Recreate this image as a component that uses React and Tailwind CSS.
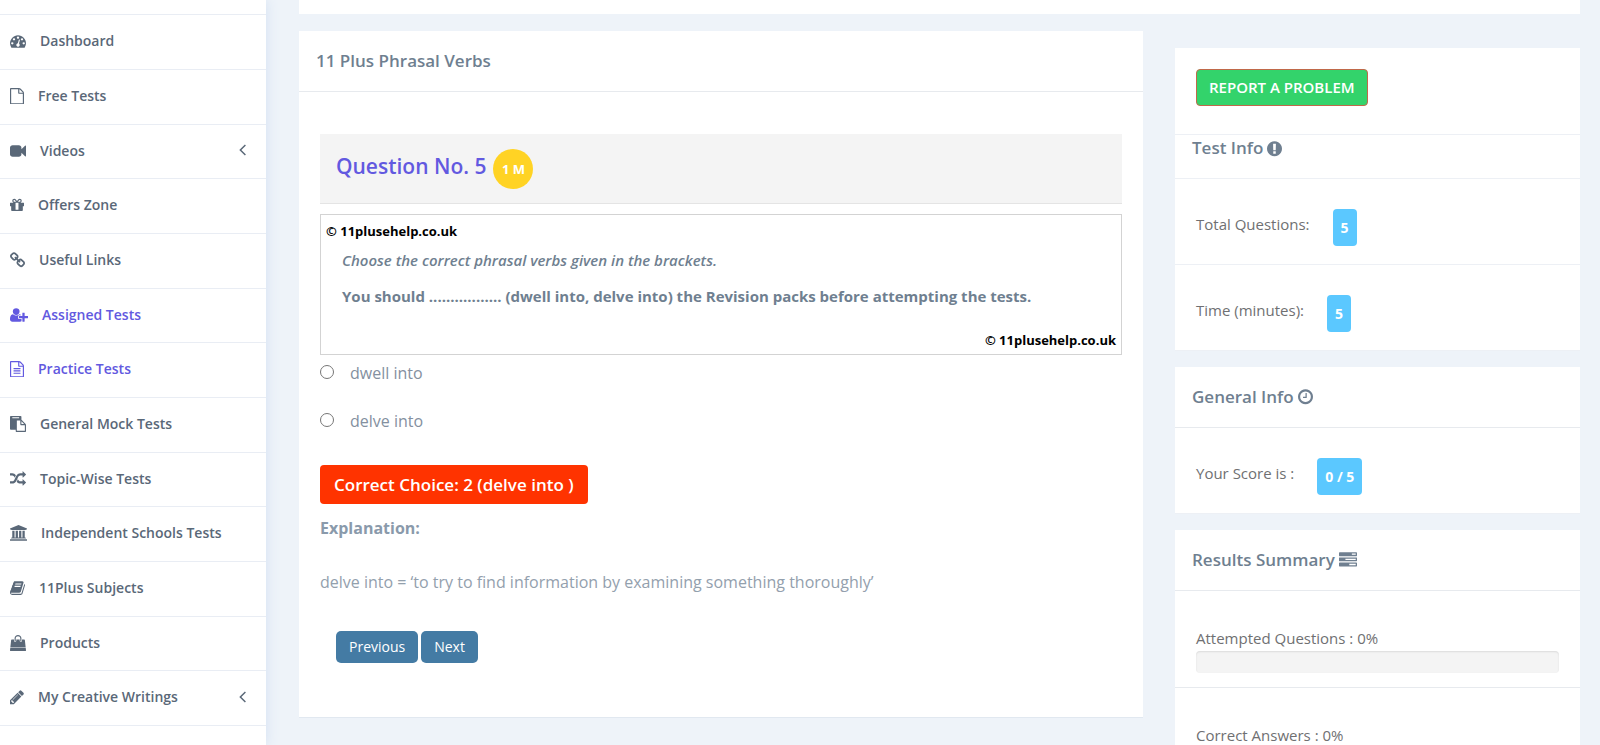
import { useState } from 'react';

// Glyphs are drawn on a 1792 unit em, each with its own advance width
const ICONS = {
  dashboard: {
    box: '0 0 1792 1792',
    size: 'w-4',
    d: 'M384 1152q0-53-37.5-90.5t-90.5-37.5-90.5 37.5-37.5 90.5 37.5 90.5 90.5 37.5 90.5-37.5 37.5-90.5zm192-448q0-53-37.5-90.5t-90.5-37.5-90.5 37.5-37.5 90.5 37.5 90.5 90.5 37.5 90.5-37.5 37.5-90.5zm428 481l101-382q6-26-7.5-48.5t-38.5-29.5-48 6.5-30 39.5l-101 382q-60 5-107 43.5t-63 98.5q-20 77 20 146t117 89 146-20 89-117q16-60-6-117t-72-91zm660-33q0-53-37.5-90.5t-90.5-37.5-90.5 37.5-37.5 90.5 37.5 90.5 90.5 37.5 90.5-37.5 37.5-90.5zm-640-640q0-53-37.5-90.5t-90.5-37.5-90.5 37.5-37.5 90.5 37.5 90.5 90.5 37.5 90.5-37.5 37.5-90.5zm448 192q0-53-37.5-90.5t-90.5-37.5-90.5 37.5-37.5 90.5 37.5 90.5 90.5 37.5 90.5-37.5 37.5-90.5zm320 448q0 261-141 483-19 29-54 29h-1402q-35 0-54-29-141-221-141-483 0-182 71-348t191-286 286-191 348-71 348 71 286 191 191 286 71 348z',
  },
  file: {
    box: '128 0 1536 1792',
    size: 'w-[14px]',
    d: 'M1596 380q28 28 48 76t20 88v1152q0 40-28 68t-68 28h-1344q-40 0-68-28t-28-68v-1600q0-40 28-68t68-28h896q40 0 88 20t76 48zm-444-244v376h376q-10-29-22-41l-313-313q-12-12-41-22zm384 1528v-1024h-416q-40 0-68-28t-28-68v-416h-768v1536h1280z',
  },
  fileText: {
    box: '128 0 1536 1792',
    size: 'w-[14px]',
    d: 'M1596 380q28 28 48 76t20 88v1152q0 40-28 68t-68 28h-1344q-40 0-68-28t-28-68v-1600q0-40 28-68t68-28h896q40 0 88 20t76 48zm-444-244v376h376q-10-29-22-41l-313-313q-12-12-41-22zm384 1528v-1024h-416q-40 0-68-28t-28-68v-416h-768v1536h1280zm-1024-864q0-14 9-23t23-9h704q14 0 23 9t9 23v64q0 14-9 23t-23 9h-704q-14 0-23-9t-9-23v-64zm736 224q14 0 23 9t9 23v64q0 14-9 23t-23 9h-704q-14 0-23-9t-9-23v-64q0-14 9-23t23-9h704zm0 256q14 0 23 9t9 23v64q0 14-9 23t-23 9h-704q-14 0-23-9t-9-23v-64q0-14 9-23t23-9h704z',
  },
  video: {
    box: '0 0 1792 1792',
    size: 'w-4',
    d: 'M1792 352v1088q0 42-39 59-13 5-25 5-27 0-45-19l-403-403v166q0 119-84.5 203.5t-203.5 84.5h-704q-119 0-203.5-84.5t-84.5-203.5v-704q0-119 84.5-203.5t203.5-84.5h704q119 0 203.5 84.5t84.5 203.5v165l403-402q18-19 45-19 12 0 25 5 39 17 39 59z',
  },
  gift: {
    box: '128 0 1536 1792',
    size: 'w-[14px]',
    d: 'M1056 1356v-716h-320v716q0 25 18 38.5t46 13.5h192q28 0 46-13.5t18-38.5zm-456-844h195l-126-161q-26-31-69-31-40 0-68 28t-28 68 28 68 68 28zm688-96q0-40-28-68t-68-28q-43 0-69 31l-125 161h194q40 0 68-28t28-68zm376 256v320q0 14-9 23t-23 9h-96v416q0 40-28 68t-68 28h-1088q-40 0-68-28t-28-68v-416h-96q-14 0-23-9t-9-23v-320q0-14 9-23t23-9h440q-93 0-158.5-65.5t-65.5-158.5 65.5-158.5 158.5-65.5q107 0 168 77l128 165 128-165q61-77 168-77 93 0 158.5 65.5t65.5 158.5-65.5 158.5-158.5 65.5h440q14 0 23 9t9 23z',
  },
  link: {
    box: '80 0 1632 1792',
    size: 'w-[15px]',
    d: 'M1520 1216q0-40-28-68l-208-208q-28-28-68-28-42 0-72 32 3 3 19 18.5t21.5 21.5 15 19 13 25.5 3.5 27.5q0 40-28 68t-68 28q-15 0-27.5-3.5t-25.5-13-19-15-21.5-21.5-18.5-19q-33 31-33 73 0 40 28 68l206 207q27 27 68 27 40 0 68-26l147-146q28-28 28-67zm-703-705q0-40-28-68l-206-207q-28-28-68-28-39 0-68 27l-147 146q-28 28-28 67 0 40 28 68l208 208q27 27 68 27 42 0 72-31-3-3-19-18.5t-21.5-21.5-15-19-13-25.5-3.5-27.5q0-40 28-68t68-28q15 0 27.5 3.5t25.5 13 19 15 21.5 21.5 18.5 19q33-31 33-73zm895 705q0 120-85 203l-147 146q-83 83-203 83-121 0-204-85l-206-207q-83-83-83-203 0-123 88-209l-88-88q-86 88-208 88-120 0-204-84l-208-208q-84-84-84-204t85-203l147-146q83-83 203-83 121 0 204 85l206 207q83 83 83 203 0 123-88 209l88 88q86-88 208-88 120 0 204 84l208 208q84 84 84 204z',
  },
  userPlus: {
    box: '0 0 2048 1792',
    size: 'w-[18px]',
    d: 'M704 896q-159 0-271.5-112.5t-112.5-271.5 112.5-271.5 271.5-112.5 271.5 112.5 112.5 271.5-112.5 271.5-271.5 112.5zm960 128h352q13 0 22.5 9.5t9.5 22.5v192q0 13-9.5 22.5t-22.5 9.5h-352v352q0 13-9.5 22.5t-22.5 9.5h-192q-13 0-22.5-9.5t-9.5-22.5v-352h-352q-13 0-22.5-9.5t-9.5-22.5v-192q0-13 9.5-22.5t22.5-9.5h352v-352q0-13 9.5-22.5t22.5-9.5h192q13 0 22.5 9.5t9.5 22.5v352zm-736 224q0 52 38 90t90 38h256v238q-68 50-171 50h-874q-121 0-194-69t-73-190q0-53 3.5-103.5t14-109 26.5-108.5 43-97.5 62-81 85.5-53.5 111.5-20q19 0 39 17 79 61 154.5 91.5t164.5 30.5 164.5-30.5 154.5-91.5q20-17 39-17 132 0 217 96h-223q-52 0-90 38t-38 90v192z',
  },
  paste: {
    box: '0 0 1792 1792',
    size: 'w-4',
    d: 'M768 1664h896v-640h-416q-40 0-68-28t-28-68v-416h-384v1152zm256-1440v-64q0-13-9.5-22.5t-22.5-9.5h-704q-13 0-22.5 9.5t-9.5 22.5v64q0 13 9.5 22.5t22.5 9.5h704q13 0 22.5-9.5t9.5-22.5zm256 672h299l-299-299v299zm512 128v672q0 40-28 68t-68 28h-960q-40 0-68-28t-28-68v-160h-544q-40 0-68-28t-28-68v-1344q0-40 28-68t68-28h1088q40 0 68 28t28 68v328q21 13 36 28l408 408q28 28 48 76t20 88z',
  },
  random: {
    box: '0 0 1792 1792',
    size: 'w-4',
    d: 'M666 481q-60 92-137 273-22-45-37-72.5t-40.5-63.5-51-56.5-63-35-81.5-14.5h-224q-14 0-23-9t-9-23v-192q0-14 9-23t23-9h224q250 0 410 225zm1126 799q0 14-9 23l-320 320q-9 9-23 9-13 0-22.5-9.5t-9.5-22.5v-192q-32 0-85 .5t-81 1-73-1-71-5-64-10.5-63-18.5-58-28.5-59-40-55-53.5-56-69.5q59-93 136-273 22 45 37 72.5t40.5 63.5 51 56.5 63 35 81.5 14.5h256v-192q0-14 9-23t23-9q12 0 24 10l319 319q9 9 9 23zm0-896q0 14-9 23l-320 320q-9 9-23 9-13 0-22.5-9.5t-9.5-22.5v-192h-256q-48 0-87 15t-69 45-51 61.5-45 77.5q-32 62-78 171-29 66-49.5 111t-54 105-64 100-74 83-90 68.5-106.5 42-128 16.5h-224q-14 0-23-9t-9-23v-192q0-14 9-23t23-9h224q48 0 87-15t69-45 51-61.5 45-77.5q32-62 78-171 29-66 49.5-111t54-105 64-100 74-83 90-68.5 106.5-42 128-16.5h256v-192q0-14 9-23t23-9q12 0 24 10l319 319q9 9 9 23z',
  },
  university: {
    box: '32 96 1920 1792',
    size: 'w-[17px]',
    d: 'M992 96l960 384v128h-128q0 26-20.5 45t-48.5 19h-1526q-28 0-48.5-19t-20.5-45h-128v-128zm-704 640h256v768h128v-768h256v768h128v-768h256v768h128v-768h256v768h59q28 0 48.5 19t20.5 45v64h-1664v-64q0-26 20.5-45t48.5-19h59v-768zm1595 960q28 0 48.5 19t20.5 45v128h-1920v-128q0-26 20.5-45t48.5-19h1782z',
  },
  book: {
    box: '64 0 1664 1792',
    size: 'w-[15px]',
    d: 'M1703 478q40 57 18 129l-275 906q-19 64-76.5 107.5t-122.5 43.5h-923q-77 0-148.5-53.5t-99.5-131.5q-24-67-2-127 0-4 3-27t4-37q1-8-3-21.5t-3-19.5q2-11 8-21t16.5-23.5 16.5-23.5q23-38 45-91.5t30-91.5q3-10 .5-30t-.5-28q3-11 17-28t17-23q21-36 42-92t25-90q1-9-2.5-32t.5-28q4-13 22-30.5t22-22.5q19-26 42.5-84.5t27.5-96.5q1-8-3-25.5t-2-26.5q2-8 9-18t18-23 17-21q8-12 16.5-30.5t15-35 16-36 19.5-32 26.5-23.5 36-11.5 47.5 5.5l-1 3q38-9 51-9h761q74 0 114 56t18 130l-274 906q-36 119-71.5 153.5t-128.5 34.5h-869q-27 0-38 15-11 16-1 43 24 70 144 70h923q29 0 56-15.5t35-41.5l300-987q7-22 5-57 38 15 59 43zm-1064 2q-4 13 2 22.5t20 9.5h608q13 0 25.5-9.5t16.5-22.5l21-64q4-13-2-22.5t-20-9.5h-608q-13 0-25.5 9.5t-16.5 22.5zm-83 256q-4 13 2 22.5t20 9.5h608q13 0 25.5-9.5t16.5-22.5l21-64q4-13-2-22.5t-20-9.5h-608q-13 0-25.5 9.5t-16.5 22.5z',
  },
  bag: {
    box: '0 0 1792 1792',
    size: 'w-4',
    d: 'M1757 1408l35 313q3 28-16 50-19 21-48 21h-1664q-29 0-48-21-19-22-16-50l35-313h1722zm-93-839l86 775h-1708l86-775q3-24 21-40.5t43-16.5h256v128q0 53 37.5 90.5t90.5 37.5 90.5-37.5 37.5-90.5v-128h384v128q0 53 37.5 90.5t90.5 37.5 90.5-37.5 37.5-90.5v-128h256q25 0 43 16.5t21 40.5zm-384-185v256q0 26-19 45t-45 19-45-19-19-45v-256q0-106-75-181t-181-75-181 75-75 181v256q0 26-19 45t-45 19-45-19-19-45v-256q0-159 112.5-271.5t271.5-112.5 271.5 112.5 112.5 271.5z',
  },
  pencil: {
    box: '128 0 1536 1792',
    size: 'w-[14px]',
    d: 'M491 1536l91-91-235-235-91 91v107h128v128h107zm523-928q0-22-22-22-10 0-17 7l-542 542q-7 7-7 17 0 22 22 22 10 0 17-7l542-542q7-7 7-17zm-54-192l416 416-832 832h-416v-416zm683 96q0 53-37 90l-166 166-416-416 166-165q36-38 90-38 53 0 91 38l235 234q37 39 37 91z',
  },
  exclamation: {
    box: '128 0 1536 1792',
    size: 'w-[15px]',
    d: 'M896 128q209 0 385.5 103t279.5 279.5 103 385.5-103 385.5-279.5 279.5-385.5 103-385.5-103-279.5-279.5-103-385.5 103-385.5 279.5-279.5 385.5-103zm128 1247v-190q0-14-9-23.5t-22-9.5h-192q-13 0-23 10t-10 23v190q0 13 10 23t23 10h192q13 0 22-9.5t9-23.5zm-2-344l18-621q0-12-10-18-10-8-24-8h-220q-14 0-24 8-10 6-10 18l17 621q0 10 10 17.5t24 7.5h185q14 0 23.5-7.5t10.5-17.5z',
  },
  clock: {
    box: '128 0 1536 1792',
    size: 'w-[15px]',
    d: 'M1024 544v448q0 14-9 23t-23 9h-320q-14 0-23-9t-9-23v-64q0-14 9-23t23-9h224v-352q0-14 9-23t23-9h64q14 0 23 9t9 23zm416 352q0-148-73-273t-198-198-273-73-273 73-198 198-73 273 73 273 198 198 273 73 273-73 198-198 73-273zm224 0q0 209-103 385.5t-279.5 279.5-385.5 103-385.5-103-279.5-279.5-103-385.5 103-385.5 279.5-279.5 385.5-103 385.5 103 279.5 279.5 103 385.5z',
  },
  tasks: {
    box: '0 0 1792 1792',
    size: 'w-[18px]',
    d: 'M1024 1408h640v-128h-640v128zm-384-512h1024v-128h-1024v128zm640-512h384v-128h-384v128zm512 832v256q0 26-19 45t-45 19h-1664q-26 0-45-19t-19-45v-256q0-26 19-45t45-19h1664q26 0 45 19t19 45zm0-512v256q0 26-19 45t-45 19h-1664q-26 0-45-19t-19-45v-256q0-26 19-45t45-19h1664q26 0 45 19t19 45zm0-512v256q0 26-19 45t-45 19h-1664q-26 0-45-19t-19-45v-256q0-26 19-45t45-19h1664q26 0 45 19t19 45z',
  },
  angleLeft: {
    box: '582 410 640 1100',
    size: 'w-[7px]',
    d: 'M1203 544q0 13-10 23l-393 393 393 393q10 10 10 23t-10 23l-50 50q-10 10-23 10t-23-10l-466-466q-10-10-10-23t10-23l466-466q10-10 23-10t23 10l50 50q10 10 10 23z',
  },
};

const MENU = [
  { label: 'Dashboard', icon: 'dashboard' },
  { label: 'Free Tests', icon: 'file' },
  { label: 'Videos', icon: 'video', sub: true },
  { label: 'Offers Zone', icon: 'gift' },
  { label: 'Useful Links', icon: 'link' },
  { label: 'Assigned Tests', icon: 'userPlus', active: true },
  { label: 'Practice Tests', icon: 'fileText', active: true },
  { label: 'General Mock Tests', icon: 'paste' },
  { label: 'Topic-Wise Tests', icon: 'random' },
  { label: 'Independent Schools Tests', icon: 'university' },
  { label: '11Plus Subjects', icon: 'book' },
  { label: 'Products', icon: 'bag' },
  { label: 'My Creative Writings', icon: 'pencil', sub: true },
];

function Icon({ name }) {
  const icon = ICONS[name];
  return (
    <svg className={`${icon.size} shrink-0 fill-current`} viewBox={icon.box} aria-hidden="true">
      <path d={icon.d} />
    </svg>
  );
}

function Sidebar() {
  return (
    <nav className="w-[266px] shrink-0 bg-white pt-[14px] shadow-[0_0_12px_#d3e0f2]">
      <ul className="border-t border-[#e9edf4]">
        {MENU.map((item) => (
          <li key={item.label} className="h-[55px] border-b border-[#e9edf4] nth-[3n]:h-[54px]">
            <a
              href="#"
              className={`flex h-full items-center gap-[14px] pr-5 pb-0.5 pl-[10px] text-sm font-semibold ${
                item.active ? 'text-[#6259e0]' : 'text-[#5a6878]'
              }`}
            >
              <Icon name={item.icon} />
              <span className="grow">{item.label}</span>
              {item.sub && <Icon name="angleLeft" />}
            </a>
          </li>
        ))}
      </ul>
    </nav>
  );
}

function CardTitle({ children }) {
  return (
    <h2 className="flex h-[61px] items-center gap-1 border-b border-[#e7eaee] px-[17px] text-[17px] font-semibold text-[#6f7f90]">
      {children}
    </h2>
  );
}

function InfoRow({ label, value }) {
  return (
    <div className="flex h-[86px] items-start gap-[23px] border-b border-[#edf0f5] px-[21px] pt-[30px] text-[15px] text-[#6f7072]">
      <span className="leading-[30px]">{label}</span>
      <span className="rounded-[4px] bg-[#5bc8ff] px-2 text-sm leading-[37px] font-bold text-white">{value}</span>
    </div>
  );
}

function ProgressRow({ label, value }) {
  return (
    <div className="h-[97px] border-b border-[#e7eaee] px-[21px] pt-[34px] text-[15px] text-[#6f7072]">
      <div className="leading-[26px]">{label} : {value}%</div>
      <div className="h-[22px] overflow-hidden rounded-[4px] bg-[#f4f4f4] shadow-[inset_0_1px_2px_#0000001a]">
        <div className="h-full bg-[#5bc8ff]" style={{ width: `${value}%` }} />
      </div>
    </div>
  );
}

function Question() {
  const [choice, setChoice] = useState('');
  const options = ['dwell into', 'delve into'];

  return (
    <section className="border-b border-[#e1e8f0] bg-white">
      <CardTitle>11 Plus Phrasal Verbs</CardTitle>
      <div className="px-[21px] pt-[42px] pb-[54px]">
        <div className="flex h-[70px] items-center gap-[7px] border-b border-[#e4e4e4] bg-[#f4f4f4] px-4">
          <h3 className="pb-1 text-[21px] font-semibold text-[#6259e0]">Question No. 5</h3>
          <span className="size-10 rounded-full bg-[#ffd324] text-center text-[13px] leading-10 font-bold text-white">1 M</span>
        </div>

        <div className="mt-[10px] border border-[#d3d3d3] px-[5px] pt-[6px] pb-1 text-[15px] text-[#6f7f90]">
          <div className="text-[13px] leading-5 font-bold text-black">© 11plusehelp.co.uk</div>
          <div className="px-4 pt-[3px]">
            <p className="leading-8 font-semibold italic">Choose the correct phrasal verbs given in the brackets.</p>
            <p className="pt-2 leading-6 font-bold">
              You should ................. (dwell into, delve into) the Revision packs before attempting the tests.
            </p>
          </div>
          <div className="pt-[22px] text-right text-[13px] leading-5 font-bold text-black">© 11plusehelp.co.uk</div>
        </div>

        {options.map((option) => (
          <label key={option} className="flex h-12 items-start gap-4 pt-[6px] text-base text-[#8490a0]">
            <input
              type="radio"
              name="answer"
              value={option}
              checked={choice === option}
              onChange={() => setChoice(option)}
              className="mt-1 size-[14px]"
            />
            <span className="leading-6">{option}</span>
          </label>
        ))}

        <div className="mt-[14px]">
          <span className="inline-block rounded-[4px] bg-[#ff3300] px-[14px] text-[17px] leading-[39px] font-semibold text-white">
            Correct Choice: 2 (delve into )
          </span>
        </div>
        <p className="pt-3 text-base leading-6 font-bold text-[#8a9aab]">Explanation:</p>
        <p className="pt-[30px] text-base leading-6 text-[#93a0ad]">
          delve into = ‘to try to find information by examining something thoroughly’
        </p>
        <div className="flex gap-[3px] px-4 pt-[37px] text-sm text-white">
          <button type="button" className="rounded-[5px] bg-[#447ba4] px-[13px] leading-8">Previous</button>
          <button type="button" className="rounded-[5px] bg-[#447ba4] px-[13px] leading-8">Next</button>
        </div>
      </div>
    </section>
  );
}

function App() {
  return (
    <div className="flex h-screen overflow-hidden bg-[#eef3f9] font-['Open_Sans',sans-serif]">
      <Sidebar />
      <main className="grow pr-5 pl-[33px]">
        <div className="h-[14px] bg-white" />
        <div className="mt-[17px] grid grid-cols-[844fr_405fr] items-start gap-x-8">
          <Question />
          <aside className="flex flex-col gap-4 pt-[17px]">
            <section className="bg-white">
              <div className="border-b border-[#edf0f5] px-[21px] pt-[21px] pb-7">
                <button
                  type="button"
                  className="rounded-[4px] border border-[#c0694a] bg-[#33d36b] px-3 text-[15px] leading-[35px] font-semibold text-white"
                >
                  REPORT A PROBLEM
                </button>
              </div>
              <h2 className="flex h-11 items-start gap-1 border-b border-[#edf0f5] px-[17px] text-[17px] leading-[26px] font-semibold text-[#6f7f90]">
                Test Info
                <span className="flex h-7 items-center">
                  <Icon name="exclamation" />
                </span>
              </h2>
              <InfoRow label="Total Questions:" value="5" />
              <InfoRow label="Time (minutes):" value="5" />
            </section>

            <section className="bg-white">
              <CardTitle>
                General Info <Icon name="clock" />
              </CardTitle>
              <InfoRow label="Your Score is :" value="0 / 5" />
            </section>

            <section className="bg-white">
              <CardTitle>
                Results Summary <Icon name="tasks" />
              </CardTitle>
              <ProgressRow label="Attempted Questions" value={0} />
              <ProgressRow label="Correct Answers" value={0} />
            </section>
          </aside>
        </div>
      </main>
    </div>
  );
}

export default App;
